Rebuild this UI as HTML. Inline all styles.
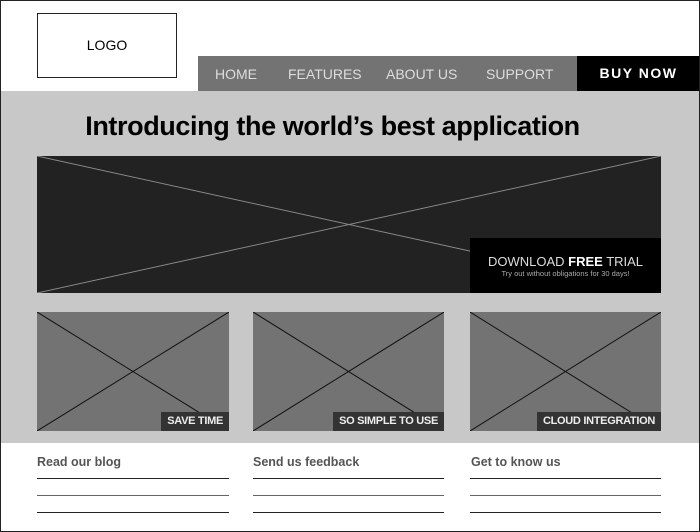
<!DOCTYPE html>
<html><head><style>
*{margin:0;padding:0;box-sizing:border-box}
body{width:700px;height:532px;position:relative;background:#fff;font-family:"Liberation Sans",Arial,sans-serif;overflow:hidden}
.a{position:absolute}
.frame{left:0;top:0;width:700px;height:532px;border:1px solid #222;z-index:10;pointer-events:none}
.lbl{position:absolute;right:0;bottom:0;height:19px;background:#333;color:#eee;font-size:11px;line-height:19px;padding:0 6px;font-weight:bold;letter-spacing:-0.3px}
.line{position:absolute;height:1px;background:#222}
.fh{position:absolute;top:455px;font-size:12.5px;font-weight:bold;color:#555}
</style></head><body>
<div class="a" style="left:37px;top:13px;width:140px;height:65px;border:1px solid #222;text-align:center;line-height:63px;font-size:14px">LOGO</div>
<div class="a" style="left:0;top:91px;width:700px;height:352px;background:#c8c8c8"></div>
<div class="a" style="left:198px;top:56px;width:379px;height:35px;background:#737373;color:#ddd;font-size:14px;line-height:37px">
<span class="a" style="left:17px">HOME</span><span class="a" style="left:90px">FEATURES</span><span class="a" style="left:188px">ABOUT US</span><span class="a" style="left:288px">SUPPORT</span></div>
<div class="a" style="left:577px;top:56px;width:123px;height:35px;background:#000;color:#fff;font-size:14px;font-weight:bold;letter-spacing:1.5px;line-height:35px;text-align:center">BUY NOW</div>
<div class="a" style="left:0;top:111px;width:665px;text-align:center;font-size:27px;font-weight:bold;letter-spacing:-0.4px">Introducing the world’s best application</div>
<svg class="a" style="left:37px;top:156px" width="624" height="137"><rect width="624" height="137" fill="#222"/><line x1="0" y1="0" x2="624" y2="137" stroke="#888"/><line x1="0" y1="137" x2="624" y2="0" stroke="#888"/></svg>
<div class="a" style="left:470px;top:238px;width:191px;height:55px;background:#000;color:#ddd;text-align:center">
<div style="font-size:13px;margin-top:16px">DOWNLOAD <b style="color:#fff">FREE</b> TRIAL</div>
<div style="font-size:7.5px;color:#aaa">Try out without obligations for 30 days!</div></div>
<div class="a" style="left:37px;top:312px;width:192px;height:119px"><svg width="192" height="119"><rect width="192" height="119" fill="#737373"/><line x1="0" y1="0" x2="192" y2="119" stroke="#111"/><line x1="0" y1="119" x2="192" y2="0" stroke="#111"/></svg><div class="lbl">SAVE TIME</div></div>
<div class="a" style="left:253px;top:312px;width:191px;height:119px"><svg width="191" height="119"><rect width="191" height="119" fill="#737373"/><line x1="0" y1="0" x2="191" y2="119" stroke="#111"/><line x1="0" y1="119" x2="191" y2="0" stroke="#111"/></svg><div class="lbl">SO SIMPLE TO USE</div></div>
<div class="a" style="left:470px;top:312px;width:191px;height:119px"><svg width="191" height="119"><rect width="191" height="119" fill="#737373"/><line x1="0" y1="0" x2="191" y2="119" stroke="#111"/><line x1="0" y1="119" x2="191" y2="0" stroke="#111"/></svg><div class="lbl">CLOUD INTEGRATION</div></div>
<div class="fh" style="left:37px">Read our blog</div>
<div class="fh" style="left:253px">Send us feedback</div>
<div class="fh" style="left:471px">Get to know us</div>
<div class="line" style="left:37px;top:478px;width:192px"></div><div class="line" style="left:37px;top:495px;width:192px;background:#666"></div><div class="line" style="left:37px;top:512px;width:192px"></div>
<div class="line" style="left:253px;top:478px;width:191px"></div><div class="line" style="left:253px;top:495px;width:191px;background:#666"></div><div class="line" style="left:253px;top:512px;width:191px"></div>
<div class="line" style="left:470px;top:478px;width:191px"></div><div class="line" style="left:470px;top:495px;width:191px;background:#666"></div><div class="line" style="left:470px;top:512px;width:191px"></div>
<div class="a frame"></div>
</body></html>
